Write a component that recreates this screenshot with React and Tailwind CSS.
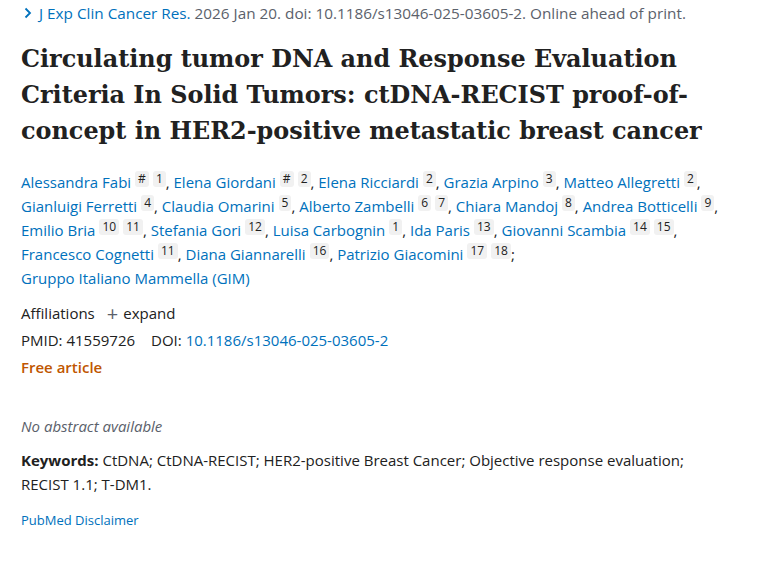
const list = [
  ['Alessandra Fabi', ['#', '1']],
  ['Elena Giordani', ['#', '2']],
  ['Elena Ricciardi', ['2']],
  ['Grazia Arpino', ['3']],
  ['Matteo Allegretti', ['2']],
  ['Gianluigi Ferretti', ['4']],
  ['Claudia Omarini', ['5']],
  ['Alberto Zambelli', ['6', '7']],
  ['Chiara Mandoj', ['8']],
  ['Andrea Botticelli', ['9']],
  ['Emilio Bria', ['10', '11']],
  ['Stefania Gori', ['12']],
  ['Luisa Carbognin', ['1']],
  ['Ida Paris', ['13']],
  ['Giovanni Scambia', ['14', '15']],
  ['Francesco Cognetti', ['11']],
  ['Diana Giannarelli', ['16']],
  ['Patrizio Giacomini', ['17', '18']],
];

// line breaks after these authors, like the reference wraps
const breaks = [4, 9, 14, 17];

function Sup({ children }) {
  return (
    <span className="ml-[4px] inline-block rounded-[3px] bg-[#f1f1f1] px-[3px] align-[5px] text-[12px] leading-[16px] text-[#212121]">
      {children}
    </span>
  );
}

export default function App() {
  return (
    <div className="min-h-[570px] bg-white px-[21px] font-['Open_Sans',sans-serif] text-[15px] text-[#212121]">
      <div className="flex items-center whitespace-nowrap pt-[3px] text-[15.3px] leading-[20px] text-[#5b616b]">
        <svg width="10" height="12" viewBox="0 0 10 12" className="ml-[2px] mr-[6px]">
          <path d="M2.5 1.5 L7 6 L2.5 10.5" fill="none" stroke="#0071bc" strokeWidth="1.8" />
        </svg>
        <span className="text-[#0071bc]">J Exp Clin Cancer Res.</span>
        <span>&nbsp;2026 Jan 20. doi: 10.1186/s13046-025-03605-2. Online ahead of print.</span>
      </div>

      <h1 className="mt-[18px] font-['DejaVu_Serif',serif] text-[23.9px] leading-[36px] font-bold text-[#212121]">
        Circulating tumor DNA and Response Evaluation
        <br />
        Criteria In Solid Tumors: ctDNA-RECIST proof-of-
        <br />
        concept in HER2-positive metastatic breast cancer
      </h1>

      <div className="mt-[21px] whitespace-nowrap leading-[24px] text-[#0071bc]">
        {list.map(([name, sups], i) => (
          <span key={name}>
            {name}
            {sups.map((s) => (
              <Sup key={s}>{s}</Sup>
            ))}
            <span className="text-[#212121]">{i === list.length - 1 ? ';' : ', '}</span>
            {breaks.includes(i) && <br />}
          </span>
        ))}
        Gruppo Italiano Mammella (GIM)
      </div>

      <div className="mt-[10px] leading-[27px]">
        <div className="flex items-center">
          Affiliations
          <span className="ml-[12px] mr-[5px] text-[20px] leading-none text-[#5b616b]">+</span>
          expand
        </div>
        <div>
          PMID: 41559726<span className="ml-[16px]">DOI: </span>
          <span className="text-[#0071bc]">10.1186/s13046-025-03605-2</span>
        </div>
        <div className="font-semibold text-[#c05600]">Free article</div>
      </div>

      <div className="mt-[34px] italic text-[#5b616b]">No abstract available</div>

      <div className="mt-[10px] leading-[24px]">
        <b>Keywords:</b> CtDNA; CtDNA-RECIST; HER2-positive Breast Cancer; Objective response evaluation;
        <br />
        RECIST 1.1; T-DM1.
      </div>

      <div className="mt-[15px] text-[13px] text-[#0071bc]">PubMed Disclaimer</div>
    </div>
  );
}
